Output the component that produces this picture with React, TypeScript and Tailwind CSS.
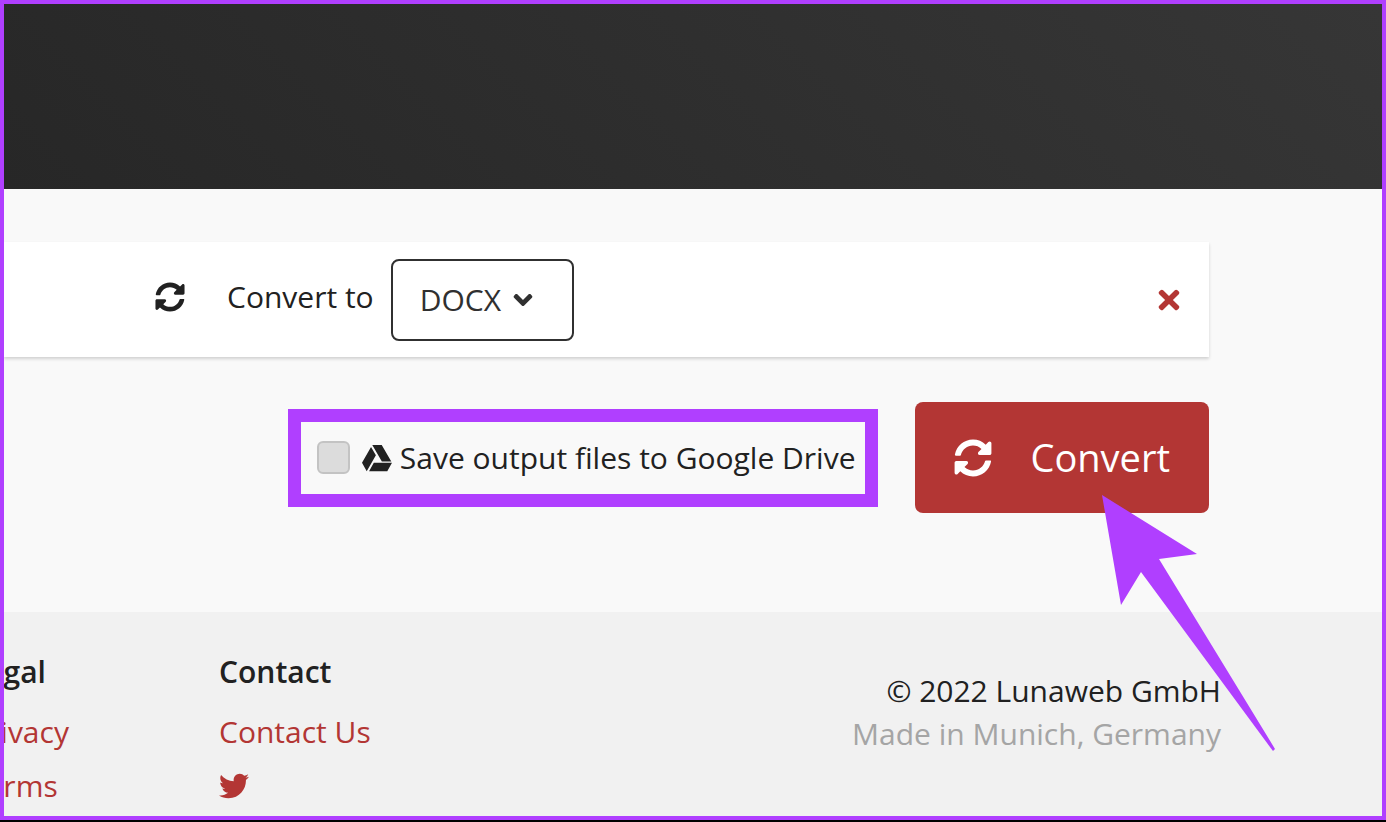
import React, {useState} from 'react';
import {FaAngleDown, FaGoogleDrive, FaSyncAlt, FaTimes, FaTwitter} from 'react-icons/fa';

function FileRow() {
    return (
        <div className="mr-[173px] flex h-[115px] items-center bg-white pr-[29px] pl-[151px] shadow-[0_2px_3px_rgba(0,0,0,0.16)]">
            <div className="flex shrink-0 items-center gap-[42px] pb-1.5">
                <FaSyncAlt className="h-[30px] w-[30px]"/>
                <label htmlFor="format" className="whitespace-nowrap">Convert to</label>
            </div>
            <div className="relative ml-[17px] flex items-center text-[#303030]">
                <select
                    id="format"
                    className="h-[82px] w-[183px] appearance-none rounded-lg border-2 border-[#303030] bg-white pl-[27px] outline-none"
                >
                    <option>DOCX</option>
                </select>
                <FaAngleDown className="pointer-events-none absolute right-9 h-[30px] w-[30px]"/>
            </div>
            <button type="button" aria-label="Remove file" className="ml-auto text-[#b33634]">
                <FaTimes className="h-[30px] w-[22px]"/>
            </button>
        </div>
    );
}

function ConvertActions() {
    const [saveToDrive, setSaveToDrive] = useState<boolean>(false);

    return (
        <div className="mr-[173px] flex items-center justify-end gap-[37px] pt-[45px]">
            <label className="flex h-[98px] items-center border-[13px] border-[#b03fff] pr-[9px] pl-4 whitespace-nowrap">
                <input
                    type="checkbox"
                    checked={saveToDrive}
                    onChange={(e) => setSaveToDrive(e.target.checked)}
                    className="h-[33px] w-[33px] appearance-none rounded-md border-2 border-[#c3c3c3] bg-[#dcdcdc] checked:bg-[#b33634]"
                />
                <FaGoogleDrive className="mr-2 ml-3 h-[30px] w-[30px]"/>
                Save output files to Google Drive
            </label>
            <button
                type="button"
                className="flex h-[111px] items-center gap-[39px] rounded-lg bg-[#b33634] px-[39px] text-[38px] text-white"
            >
                <FaSyncAlt className="h-[38px] w-[38px]"/>
                Convert
            </button>
        </div>
    );
}

function Footer() {
    return (
        <footer className="flex grow items-start justify-between bg-[#f1f1f1] pt-10 pr-[161px]">
            <div className="flex">
                <div className="-ml-[34px] flex w-[249px] flex-col">
                    <h4 className="mb-[13px] leading-10 font-semibold">Legal</h4>
                    <a href="#" className="leading-[54px] text-[#b33634]">Privacy</a>
                    <a href="#" className="leading-[54px] text-[#b33634]">Terms</a>
                </div>
                <div className="flex flex-col">
                    <h4 className="mb-[13px] leading-10 font-semibold">Contact</h4>
                    <a href="#" className="leading-[54px] text-[#b33634]">Contact Us</a>
                    <a href="#" aria-label="Twitter" className="flex h-[54px] items-center text-[#b33634]">
                        <FaTwitter className="h-[30px] w-[30px]"/>
                    </a>
                </div>
            </div>
            <div className="pt-[17px] text-right leading-[43px]">
                <p>© 2022 Lunaweb GmbH</p>
                <p className="text-[#a5a5a5]">Made in Munich, Germany</p>
            </div>
        </footer>
    );
}

export default function App() {
    return (
        <div className="min-h-screen bg-black pb-0.5 font-['Open_Sans',sans-serif] text-[30px] text-[#212121]">
            <div className="relative flex min-h-[calc(100vh-2px)] flex-col overflow-hidden border-4 border-[#b03fff] bg-[#f9f9f9]">
                <header className="h-[185px] bg-linear-45 from-[#272727] to-[#363636]"/>
                <main className="pt-[53px] pb-[99px]">
                    <FileRow/>
                    <ConvertActions/>
                </main>
                <Footer/>
                {/* arrow pointing at the convert button */}
                <svg
                    viewBox="0 0 174 256"
                    className="pointer-events-none absolute top-[491px] right-[106px] h-[256px] w-[174px]"
                    fill="#b03fff"
                >
                    <path d="M0 0L95 59L57 64L173 254L171 256L39 77L19 110Z"/>
                </svg>
            </div>
        </div>
    );
}
